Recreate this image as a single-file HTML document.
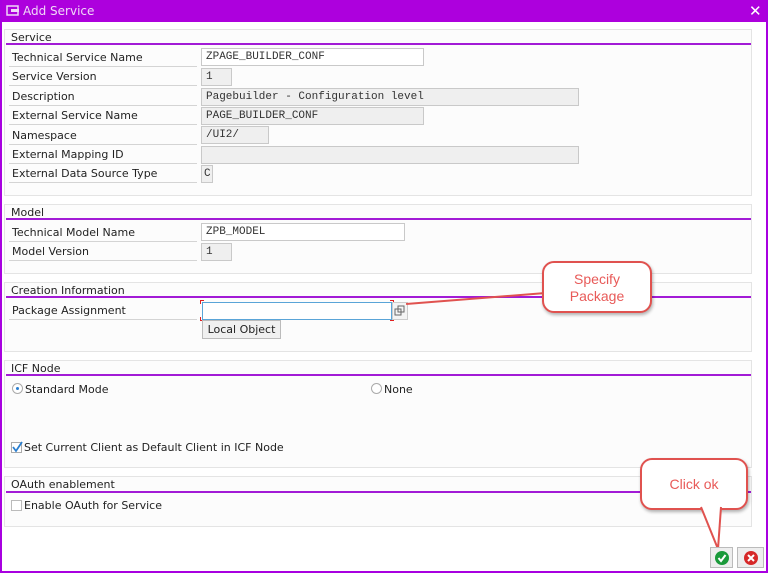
<!DOCTYPE html>
<html><head><meta charset="utf-8"><style>
*{margin:0;padding:0;box-sizing:border-box}
body{width:768px;height:573px;position:relative;overflow:hidden;background:#fff;font-family:"DejaVu Sans","Liberation Sans",sans-serif;font-size:11px;color:#222}
.a{position:absolute}
.win{left:0;top:0;width:768px;height:573px;border:2px solid #a800e0;border-top:none}
.title{left:0;top:0;width:768px;height:22px;background:#ad00dd;color:#f0d8f8;font-size:12px}
.sec{border:1px solid #e4e4e4;background:#fcfcfc}
.sh{font-size:11px;color:#222}
.line{height:2px;background:#a21bd6}
.lbl{border-bottom:1px solid #d4d4d4;height:18px;line-height:18px;padding-left:3px}
.inp{height:18px;border:1px solid #c9c9c9;font-family:"Liberation Mono",monospace;font-size:11px;line-height:17px;padding-left:4px;background:#efefef;color:#333}
.w{background:#fff}
.call{border:2px solid #e0524f;border-radius:12px;background:#fff;color:#e85a58;font-family:"Liberation Sans",sans-serif;font-size:14px;text-align:center;box-shadow:1px 2px 3px rgba(0,0,0,.3)}
.c{position:absolute;width:4px;height:4px;border-color:#e02020;border-style:solid;border-width:0}
</style></head><body>
<div class="a title"><svg class="a" style="left:6px;top:5px" width="14" height="12"><rect x="1" y="1" width="11" height="9" fill="none" stroke="#f0d8f8" stroke-width="1.5"/><rect x="5" y="4" width="8" height="3" fill="#f0d8f8"/></svg><span class="a" style="left:23px;top:4px">Add Service</span><span class="a" style="left:749px;top:2px;font-size:15px;color:#fff">✕</span></div>
<div class="a win"></div>

<div class="a sec" style="left:4px;top:29px;width:748px;height:167px"></div>
<div class="a sh" style="left:11px;top:31px">Service</div>
<div class="a line" style="left:6px;top:43px;width:745px"></div>
<div class="a lbl" style="left:9px;top:49px;width:188px">Technical Service Name</div>
<div class="a inp w" style="left:201px;top:48px;width:223px">ZPAGE_BUILDER_CONF</div>
<div class="a lbl" style="left:9px;top:68px;width:188px">Service Version</div>
<div class="a inp" style="left:201px;top:68px;width:31px">1</div>
<div class="a lbl" style="left:9px;top:88px;width:188px">Description</div>
<div class="a inp" style="left:201px;top:88px;width:378px">Pagebuilder - Configuration level</div>
<div class="a lbl" style="left:9px;top:107px;width:188px">External Service Name</div>
<div class="a inp" style="left:201px;top:107px;width:223px">PAGE_BUILDER_CONF</div>
<div class="a lbl" style="left:9px;top:127px;width:188px">Namespace</div>
<div class="a inp" style="left:201px;top:126px;width:68px">/UI2/</div>
<div class="a lbl" style="left:9px;top:146px;width:188px">External Mapping ID</div>
<div class="a inp" style="left:201px;top:146px;width:378px"></div>
<div class="a lbl" style="left:9px;top:165px;width:188px">External Data Source Type</div>
<div class="a inp" style="left:201px;top:165px;width:12px;padding-left:2px">C</div>

<div class="a sec" style="left:4px;top:204px;width:748px;height:70px"></div>
<div class="a sh" style="left:11px;top:206px">Model</div>
<div class="a line" style="left:6px;top:218px;width:745px"></div>
<div class="a lbl" style="left:9px;top:224px;width:188px">Technical Model Name</div>
<div class="a inp w" style="left:201px;top:223px;width:204px">ZPB_MODEL</div>
<div class="a lbl" style="left:9px;top:243px;width:188px">Model Version</div>
<div class="a inp" style="left:201px;top:243px;width:31px">1</div>

<div class="a sec" style="left:4px;top:282px;width:748px;height:70px"></div>
<div class="a sh" style="left:11px;top:284px">Creation Information</div>
<div class="a line" style="left:6px;top:296px;width:745px"></div>
<div class="a lbl" style="left:9px;top:302px;width:188px">Package Assignment</div>
<div class="a inp w" style="left:202px;top:302px;width:190px;border-color:#5aa5d8"></div>
<div class="c" style="left:200px;top:300px;border-left-width:1px;border-top-width:1px"></div>
<div class="c" style="left:390px;top:300px;border-right-width:1px;border-top-width:1px"></div>
<div class="c" style="left:200px;top:317px;border-left-width:1px;border-bottom-width:1px"></div>
<div class="c" style="left:390px;top:317px;border-right-width:1px;border-bottom-width:1px"></div>
<div class="a" style="left:392px;top:302px;width:16px;height:18px;border:1px solid #ccc;background:#f4f4f4"><svg width="14" height="16"><rect x="2" y="6" width="6" height="6" fill="none" stroke="#666"/><rect x="5" y="3" width="6" height="6" fill="none" stroke="#666"/></svg></div>
<div class="a" style="left:202px;top:320px;width:79px;height:19px;border:1px solid #bbb;background:#f0f0f0;text-align:center;line-height:18px">Local Object</div>
<div class="a" style="left:406px;top:303px;width:140px;border-top:2px solid #e0524f;transform:rotate(-4.5deg);transform-origin:0 0"></div>
<div class="a call" style="left:542px;top:261px;width:110px;height:52px;padding-top:8px;line-height:17px">Specify<br>Package</div>

<div class="a sec" style="left:4px;top:360px;width:748px;height:108px"></div>
<div class="a sh" style="left:11px;top:362px">ICF Node</div>
<div class="a line" style="left:6px;top:374px;width:745px"></div>
<div class="a" style="left:12px;top:383px;width:11px;height:11px;border:1px solid #aaa;border-radius:50%;background:#fff"><div class="a" style="left:3px;top:3px;width:3px;height:3px;border-radius:50%;background:#2a7fd0"></div></div>
<div class="a" style="left:25px;top:383px">Standard Mode</div>
<div class="a" style="left:371px;top:383px;width:11px;height:11px;border:1px solid #aaa;border-radius:50%;background:#fff"></div>
<div class="a" style="left:384px;top:383px">None</div>
<div class="a" style="left:11px;top:442px;width:11px;height:11px;border:1px solid #aaa;background:#fff"><svg class="a" style="left:0;top:-2px" width="12" height="12"><path d="M1 6 L4 10 L10 1" fill="none" stroke="#2a7fd0" stroke-width="1.8"/></svg></div>
<div class="a" style="left:24px;top:441px">Set Current Client as Default Client in ICF Node</div>

<div class="a sec" style="left:4px;top:476px;width:748px;height:51px"></div>
<div class="a sh" style="left:11px;top:478px">OAuth enablement</div>
<div class="a line" style="left:6px;top:491px;width:745px"></div>
<div class="a" style="left:11px;top:500px;width:11px;height:11px;border:1px solid #bbb;background:#fff"></div>
<div class="a" style="left:24px;top:499px">Enable OAuth for Service</div>

<div class="a call" style="left:640px;top:458px;width:108px;height:52px;padding-top:16px">Click ok</div>
<svg class="a" style="left:700px;top:500px" width="40" height="50"><path d="M1 7 L18 49 L21 7 Z" fill="#fff"/><path d="M1 7 L18 49 L21 7" fill="none" stroke="#e0524f" stroke-width="2"/></svg>

<div class="a" style="left:710px;top:547px;width:23px;height:21px;border:1px solid #bbb;background:#eee"><svg class="a" style="left:3px;top:2px" width="16" height="16"><circle cx="8" cy="8" r="7" fill="#1a9a3a"/><path d="M4.5 8 L7 11 L11.5 5" fill="none" stroke="#fff" stroke-width="2"/></svg></div>
<div class="a" style="left:737px;top:547px;width:27px;height:21px;border:1px solid #bbb;background:#eee"><svg class="a" style="left:5px;top:2px" width="16" height="16"><circle cx="8" cy="8" r="7" fill="#d62828"/><path d="M5 5 L11 11 M11 5 L5 11" stroke="#fff" stroke-width="2"/></svg></div>
</body></html>
